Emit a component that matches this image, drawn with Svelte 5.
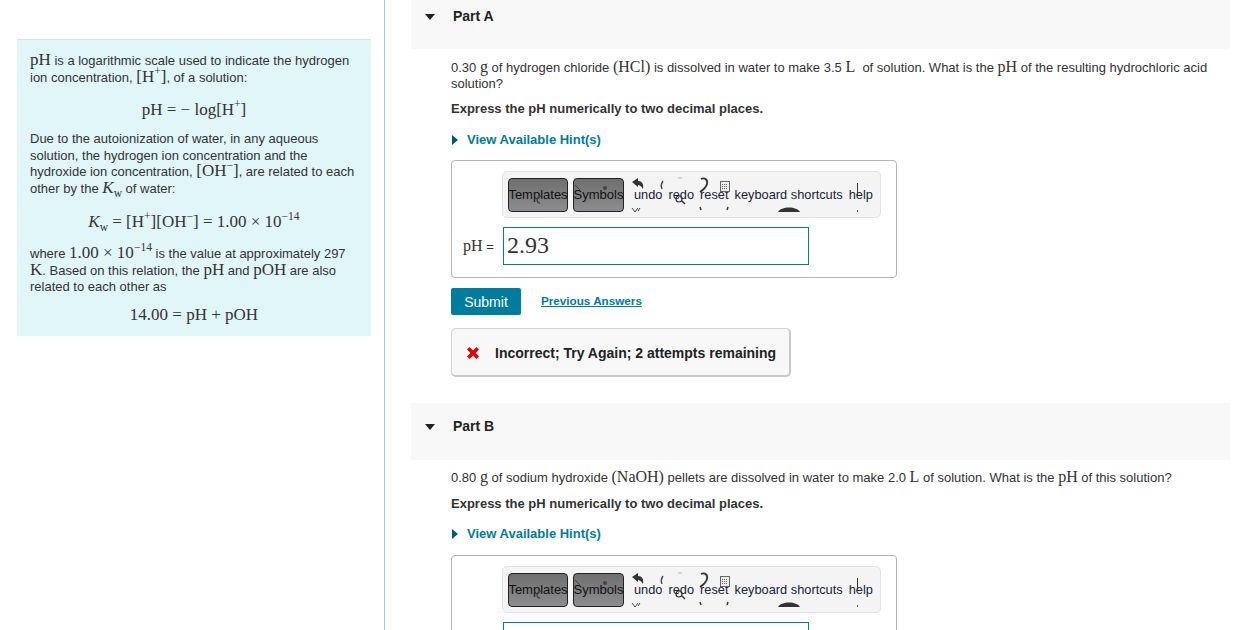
<script lang="ts">
	const toolbarText = ['undo', 'redo', 'reset', 'keyboard shortcuts', 'help'];
</script>

{#snippet toolbar()}
	<div class="toolbar">
		<span class="tool-btn templates">Templates</span>
		<span class="tool-btn symbols">Symbols</span>
		<div class="tool-links">
			{#each toolbarText as t}
				<span class="tool-link">{t}</span>
			{/each}
		</div>
		<svg class="sprites" width="379" height="47" viewBox="0 0 379 47">
			<!-- broken sprite scraps that show through the toolbar -->
			<path d="M130 11 L136 7 L136 10 C140 10 142 13 141 18 C139 15 138 14 136 14 L136 16 Z" fill="#333" />
			<path d="M161 10 C159 13 159 16 160 18" stroke="#444" stroke-width="1.4" fill="none" />
			<path d="M176 7 H180" stroke="#bbb" stroke-width="1" fill="none" />
			<path d="M199 8 C203 6 206 9 205 13 C204 17 201 19 198 21" stroke="#333" stroke-width="1.8" fill="none" />
			<rect x="218.500" y="10.500" width="9" height="10" fill="#eee" stroke="#666" stroke-width="1" />
			<path d="M220 13.500 H226 M220 15.500 H226 M220 17.500 H226" stroke="#666" stroke-width="1" stroke-dasharray="1 1" />
			<circle cx="103" cy="17" r="2" fill="#444" />
			<path d="M73 14 L78 19" stroke="#444" stroke-width="1" />
			<path d="M39 25 C34 26 34 32 38 32" stroke="#444" stroke-width="1.6" fill="none" />
			<circle cx="177" cy="28" r="3" stroke="#333" stroke-width="1.2" fill="none" />
			<path d="M180 30 L183 33" stroke="#333" stroke-width="1.4" />
			<path d="M130 37 L133 41 M136 37 L133 41 M138 37 L136 40" stroke="#444" stroke-width="1" fill="none" />
			<path d="M198 36 L199 39" stroke="#333" stroke-width="1.5" />
			<path d="M226 36 L225 39" stroke="#333" stroke-width="1.5" />
			<path d="M276 41 C279 35 295 35 298 41 Z" fill="#333" />
			<path d="M355.500 12 V24" stroke="#333" stroke-width="1" />
			<path d="M355.500 39 V41" stroke="#555" stroke-width="1" />
		</svg>
	</div>
{/snippet}

<div class="page">
	<aside class="side">
		<div class="intro">
			<p class="flat">
				<span class="m big">pH</span> is a logarithmic scale used to indicate the hydrogen ion concentration, <span class="m big">[H<sup>+</sup>]</span>, of a solution:
			</p>
			<p class="eq e1">pH = − log[H<sup>+</sup>]</p>
			<p class="flat">
				Due to the autoionization of water, in any aqueous solution, the hydrogen ion concentration and the hydroxide ion concentration, <span class="m big">[OH<sup>−</sup>]</span>, are related to each other by the <span class="m big"><i>K</i><sub>w</sub></span> of water:
			</p>
			<p class="eq e2"><i>K</i><sub>w</sub> = [H<sup>+</sup>][OH<sup>−</sup>] = 1.00 × 10<sup>−14</sup></p>
			<p class="flat">
				where <span class="m big">1.00 × 10<sup>−14</sup></span> is the value at approximately 297 <span class="m big">K</span>. Based on this relation, the <span class="m big">pH</span> and <span class="m big">pOH</span> are also related to each other as
			</p>
			<p class="eq e3">14.00 = pH + pOH</p>
		</div>
	</aside>

	<main class="main">
		<section class="part">
			<header class="part-head a">
				<span class="caret"></span>
				<h2>Part A</h2>
			</header>
			<div class="part-body">
				<p class="q">
					0.30 <span class="m mid">g</span> of hydrogen chloride <span class="m mid">(HCl)</span> is dissolved in water to make 3.5 <span class="m mid">L</span>&nbsp; of solution. What is the <span class="m mid">pH</span> of the resulting hydrochloric acid solution?
				</p>
				<p class="express">Express the pH numerically to two decimal places.</p>
				<div class="hint"><span class="hint-arrow"></span>View Available Hint(s)</div>
				<div class="answer-box">
					{@render toolbar()}
					<div class="answer-row">
						<span class="label"><span class="m">pH</span> =</span>
						<div class="input">2.93</div>
					</div>
				</div>
				<div class="actions">
					<button class="submit">Submit</button>
					<a class="prev" href="#prev">Previous Answers</a>
				</div>
				<div class="feedback">
					<svg width="14" height="14" viewBox="0 0 14 14">
						<path d="M1 3.500 L3.500 1 L7 4.500 L10.500 1 L13 3.500 L9.500 7 L13 10.500 L10.500 13 L7 9.500 L3.500 13 L1 10.500 L4.500 7 Z" fill="#e60000" />
					</svg>
					<span>Incorrect; Try Again; 2 attempts remaining</span>
				</div>
			</div>
		</section>

		<section class="part">
			<header class="part-head b">
				<span class="caret"></span>
				<h2>Part B</h2>
			</header>
			<div class="part-body second">
				<p class="q">
					0.80 <span class="m mid">g</span> of sodium hydroxide <span class="m mid">(NaOH)</span> pellets are dissolved in water to make 2.0 <span class="m mid">L</span> of solution. What is the <span class="m mid">pH</span> of this solution?
				</p>
				<p class="express">Express the pH numerically to two decimal places.</p>
				<div class="hint"><span class="hint-arrow"></span>View Available Hint(s)</div>
				<div class="answer-box">
					{@render toolbar()}
					<div class="answer-row">
						<span class="label"></span>
						<div class="input"></div>
					</div>
				</div>
			</div>
		</section>
	</main>
</div>

<style>
	:global(html), :global(body) {
		margin: 0;
		height: 630px;
		overflow: hidden;
		background: #fff;
	}

	.page {
		display: flex;
		height: 630px;
		overflow: hidden;
		font-family: 'Liberation Sans', Arial, sans-serif;
		font-size: 13px;
		line-height: 16px;
		color: #333;
	}

	.side {
		width: 385px;
		flex: none;
		box-sizing: border-box;
		border-right: 1px solid #a9c8e0;
		padding: 39px 13px 0 17px;
	}

	.intro {
		background: #e1f6f9;
		border-top: 1px solid #cfe6ea;
		padding: 13px 13px 0 13px;
		height: 297px;
		box-sizing: border-box;
	}

	p {
		margin: 0;
	}

	.flat {
		line-height: 16.5px;
	}

	.m {
		font-family: 'Liberation Serif', 'Times New Roman', serif;
	}

	.big {
		font-size: 17px;
		line-height: 0;
	}

	.mid {
		font-size: 16px;
		line-height: 0;
	}

	sup, sub {
		font-size: 0.68em;
		line-height: 0;
	}

	.eq {
		font-family: 'Liberation Serif', 'Times New Roman', serif;
		font-size: 17px;
		line-height: 20px;
		text-align: center;
	}

	.e1 {
		margin: 14px 0 11px;
	}

	.e2 {
		margin: 15px 0 14px;
	}

	.e3 {
		margin-top: 9px;
	}

	.main {
		flex: 1;
		min-width: 0;
		padding: 0 12px 0 26px;
	}

	.part-head {
		position: relative;
		background: #f8f8f8;
		box-sizing: border-box;
		padding: 8px 0 0 42px;
	}

	.part-head.a {
		height: 49px;
		margin-bottom: 11px;
	}

	.part-head.b {
		height: 57px;
		padding-top: 15px;
		margin-bottom: 10px;
	}

	.part + .part {
		margin-top: 26px;
	}

	.caret {
		position: absolute;
		left: 14px;
		top: 14px;
		width: 0;
		height: 0;
		border-left: 5.5px solid transparent;
		border-right: 5.5px solid transparent;
		border-top: 6px solid #222;
	}

	.part-head.b .caret {
		top: 21px;
	}

	h2 {
		margin: 0;
		font-size: 14px;
		line-height: 17px;
		font-weight: 700;
		color: #222;
	}

	.part-body {
		padding-left: 40px;
	}

	.q {
		line-height: 16px;
	}

	.express {
		font-weight: 700;
		margin-top: 8px;
		line-height: 17px;
	}

	.second .express {
		margin-top: 9px;
	}

	.hint {
		display: flex;
		align-items: center;
		font-weight: 700;
		color: #007c9e;
		margin-top: 14px;
		line-height: 17px;
	}

	.second .hint {
		margin-top: 13px;
	}

	.hint-arrow {
		width: 0;
		height: 0;
		border-top: 5px solid transparent;
		border-bottom: 5px solid transparent;
		border-left: 6px solid #005a73;
		margin: 0 9px 0 1px;
	}

	.answer-box {
		width: 446px;
		height: 118px;
		margin-top: 12px;
		box-sizing: border-box;
		border: 1px solid #b5b5b5;
		border-radius: 4px;
		padding: 10px 0 0 10px;
	}

	.second .answer-box {
		margin-top: 13px;
	}

	.toolbar {
		position: relative;
		width: 379px;
		height: 47px;
		box-sizing: border-box;
		margin-left: 40px;
		background: #f4f4f4;
		border: 1px solid #e3e3e3;
		border-radius: 5px;
		display: flex;
		align-items: center;
		padding-left: 5px;
		gap: 5px;
	}

	.tool-btn {
		height: 34px;
		box-sizing: border-box;
		border: 1px solid #222;
		border-radius: 4px;
		background: linear-gradient(#6f6f6f, #8d8c90);
		display: flex;
		align-items: center;
		justify-content: center;
		color: #111;
		line-height: 1;
	}

	.templates {
		width: 60px;
	}

	.symbols {
		width: 51px;
	}

	.tool-links {
		display: flex;
		gap: 6px;
		margin-left: 5px;
		font-size: 12.8px;
	}

	.tool-link {
		color: #14243a;
		white-space: nowrap;
	}

	.sprites {
		position: absolute;
		left: -1px;
		top: -1px;
		pointer-events: none;
	}

	.answer-row {
		display: flex;
		align-items: center;
		gap: 9px;
		margin-top: 9px;
		padding-left: 1px;
	}

	.label {
		width: 31px;
		flex: none;
		white-space: nowrap;
		color: #333;
	}

	.label .m {
		font-size: 16px;
	}

	.input {
		width: 306px;
		height: 38px;
		flex: none;
		box-sizing: border-box;
		border: 1px solid #007c9e;
		font-family: 'Liberation Serif', 'Times New Roman', serif;
		font-size: 24px;
		line-height: 34px;
		padding-left: 3px;
		color: #333;
	}

	.actions {
		display: flex;
		align-items: center;
		gap: 20px;
		margin-top: 10px;
	}

	.submit {
		width: 70px;
		height: 27px;
		border: 0;
		border-radius: 2px;
		background: #007c9e;
		color: #fff;
		font-family: inherit;
		font-size: 14px;
		padding: 0;
	}

	.prev {
		font-size: 11.7px;
		font-weight: 700;
		color: #007c9e;
		margin-bottom: 2px;
	}

	.feedback {
		display: flex;
		align-items: center;
		gap: 15px;
		width: 340px;
		height: 49px;
		box-sizing: border-box;
		margin-top: 13px;
		padding: 1px 0 0 14px;
		background: #f8f8f8;
		border: 1px solid #d4d4d4;
		border-bottom: 2px solid #c8c8c8;
		border-right: 2px solid #c8c8c8;
		border-radius: 5px;
		font-size: 14px;
		font-weight: 700;
		color: #222;
		white-space: nowrap;
	}
</style>
